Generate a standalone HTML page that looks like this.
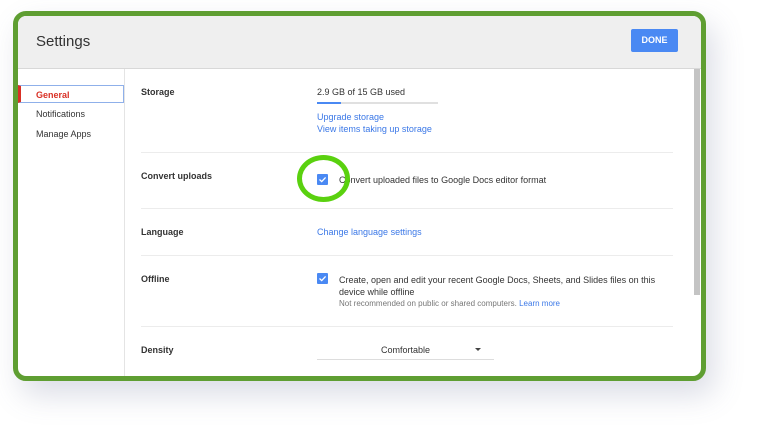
<!DOCTYPE html>
<html><head><style>
*{margin:0;padding:0;box-sizing:border-box}
body{width:768px;height:429px;background:#fff;font-family:"Liberation Sans",Arial,sans-serif;position:relative;overflow:hidden}
.frame{position:absolute;left:13px;top:11px;width:693px;height:370px;border:5px solid #5f9e32;border-radius:13px;overflow:hidden;background:#fff;box-shadow:8px 14px 30px rgba(90,100,140,0.22)}
.hdr{position:absolute;left:0;top:0;width:100%;height:53px;background:#efefef;border-bottom:1px solid #d8d8d8}
.hdr .t{position:absolute;left:18px;top:17px;font-size:15px;color:#333}
.done{position:absolute;left:613px;top:13px;width:47px;height:23px;background:#4a89f3;border-radius:2px;color:#fff;font-size:9px;font-weight:bold;text-align:center;line-height:23px}
.side{position:absolute;left:0;top:53px;width:107px;height:320px;border-right:1px solid #e4e4e4}
.nav{position:absolute;left:18px;font-size:9px;color:#333}
.gen{position:absolute;left:0;top:16px;width:106px;height:18px;border:1px solid #8fb0ea;border-left:3px solid #d93025}
.scroll{position:absolute;left:676px;top:53px;width:6px;height:226px;background:#c4c4c4}
.lab{position:absolute;left:123px;font-size:9px;font-weight:bold;color:#333}
.txt{position:absolute;font-size:9px;color:#333}
.lnk{position:absolute;font-size:9px;color:#3b78e7}
.sep{position:absolute;left:123px;width:532px;height:1px;background:#ececec}
.cb{position:absolute;width:11px;height:11px;background:#4a89f3;border-radius:1px}
.cb svg{position:absolute;left:1px;top:1px}
</style></head><body>
<div class="frame">
 <div class="hdr"><div class="t">Settings</div><div class="done">DONE</div></div>
 <div class="side">
  <div class="gen"></div>
  <div class="nav" style="top:21px;color:#d93025;font-weight:bold">General</div>
  <div class="nav" style="top:40px">Notifications</div>
  <div class="nav" style="top:60px">Manage Apps</div>
 </div>
 <div class="scroll"></div>
 <div class="lab" style="top:71px">Storage</div>
 <div class="txt" style="left:299px;top:71px">2.9 GB of 15 GB used</div>
 <div style="position:absolute;left:299px;top:86px;width:121px;height:2px;background:#e0e0e0"><div style="width:24px;height:2px;background:#4a89f3"></div></div>
 <div class="lnk" style="left:299px;top:96px">Upgrade storage</div>
 <div class="lnk" style="left:299px;top:108px">View items taking up storage</div>
 <div class="sep" style="top:136px"></div>
 <div class="lab" style="top:155px">Convert uploads</div>
 <div class="cb" style="left:299px;top:158px"><svg width="9" height="9"><path d="M1.5 4.5 L3.7 6.6 L7.6 2.4" stroke="#fff" stroke-width="1.3" fill="none"/></svg></div>
 <div class="txt" style="left:321px;top:159px">Convert uploaded files to Google Docs editor format</div>
 <div style="position:absolute;left:279px;top:139px;width:53px;height:47px;border:5px solid #5ad10f;border-radius:50%"></div>
 <div class="sep" style="top:192px"></div>
 <div class="lab" style="top:211px">Language</div>
 <div class="lnk" style="left:299px;top:211px">Change language settings</div>
 <div class="sep" style="top:239px"></div>
 <div class="lab" style="top:258px">Offline</div>
 <div class="cb" style="left:299px;top:257px"><svg width="9" height="9"><path d="M1.5 4.5 L3.7 6.6 L7.6 2.4" stroke="#fff" stroke-width="1.3" fill="none"/></svg></div>
 <div class="txt" style="left:321px;top:258px;line-height:12px">Create, open and edit your recent Google Docs, Sheets, and Slides files on this<br>device while offline</div>
 <div class="txt" style="left:321px;top:283px;font-size:8px;color:#777">Not recommended on public or shared computers. <span style="color:#3b78e7">Learn more</span></div>
 <div class="sep" style="top:310px"></div>
 <div class="lab" style="top:329px">Density</div>
 <div class="txt" style="left:363px;top:329px">Comfortable</div>
 <div style="position:absolute;left:457px;top:332px;width:0;height:0;border-left:3px solid transparent;border-right:3px solid transparent;border-top:3px solid #444"></div>
 <div style="position:absolute;left:299px;top:343px;width:177px;height:1px;background:#ddd"></div>
</div>
</body></html>
